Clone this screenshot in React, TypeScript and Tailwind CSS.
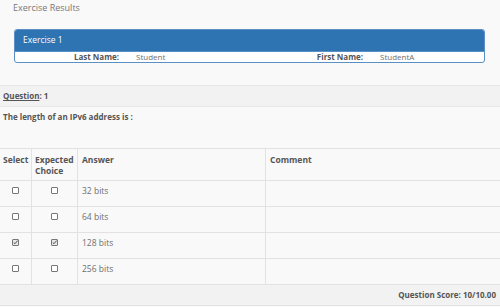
import React from "react";

function Box({ checked }: { checked?: boolean }) {
  return (
    <span className={"inline-flex w-[7px] h-[7px] border border-[#777] rounded-[1px] items-center justify-center " + (checked ? "bg-[#e8e8e8]" : "bg-white")}>
      {checked ? (
        <svg width="7" height="7" viewBox="0 0 7 7" className="block">
          <path d="M1 3.5 L2.8 5.2 L6.5 0.8" stroke="#444" strokeWidth="1.3" fill="none" />
        </svg>
      ) : null}
    </span>
  );
}

const rows = [
  { a: "32 bits", c: false, first: true },
  { a: "64 bits", c: false },
  { a: "128 bits", c: true },
  { a: "256 bits", c: false },
];

export default function App() {
  return (
    <div className="w-[500px] h-[307px] bg-[#f9f9f9] text-[#6f6f6f] overflow-hidden" style={{ fontFamily: '"Open Sans", sans-serif' }}>
      <div className="pl-[13px] pt-[1px] h-[29px] text-[9px] text-[#777]">Exercise Results</div>
      <div className="ml-[14px] w-[471px] border border-[#5a90c4] rounded-[3px] overflow-hidden bg-white">
        <div className="h-[21px] bg-[#2e73b2] text-white text-[8.5px] pl-[8px] flex items-center">Exercise 1</div>
        <div className="flex h-[11px] items-center text-[8px] border-t border-[#5a90c4]">
          <div className="w-[112px] text-right pr-[8px] font-bold text-[#555]">Last Name:</div>
          <div className="w-[132px] pl-[9px]">Student</div>
          <div className="w-[112px] text-right pr-[8px] font-bold text-[#555]">First Name:</div>
          <div className="flex-1 pl-[9px]">StudentA</div>
        </div>
      </div>
      <div className="h-[22px]" />
      <div className="border-t border-[#e6e6e6] bg-[#f2f2f2] h-[21px] flex items-center pl-[3px] text-[8px] font-bold text-[#555]">
        <span className="underline">Question</span>: 1
      </div>
      <div className="h-[42px] border-t border-[#e8e8e8] pl-[3px] pt-[4px] text-[8px] font-bold text-[#555]">
        The length of an IPv6 address is :
      </div>
      <div className="border-t border-[#e2e2e2]">
        <div className="flex h-[32px] text-[8.5px] font-bold text-[#555] border-b border-[#e2e2e2]">
          <div className="w-[32px] pl-[3px] pt-[5px] leading-[11px] border-r border-[#e2e2e2]">Select</div>
          <div className="w-[46px] pl-[3px] pt-[5px] leading-[11px] border-r border-[#e2e2e2]">Expected<br />Choice</div>
          <div className="w-[188px] pl-[4px] pt-[5px] leading-[11px] border-r border-[#e2e2e2]">Answer</div>
          <div className="flex-1 pl-[4px] pt-[5px] leading-[11px]">Comment</div>
        </div>
        {rows.map((r) => (
          <div key={r.a} className={"flex text-[8.5px] leading-[11px] " + (r.first ? "h-[25px]" : "h-[26px] border-t border-[#e2e2e2]")}>
            <div className="w-[32px] border-r border-[#e2e2e2] flex justify-center pt-[6px]"><Box checked={r.c} /></div>
            <div className="w-[46px] border-r border-[#e2e2e2] flex justify-center pt-[6px]"><Box checked={r.c} /></div>
            <div className="w-[188px] pl-[4px] pt-[4px] border-r border-[#e2e2e2]">{r.a}</div>
            <div className="flex-1" />
          </div>
        ))}
        <div className="border-t border-b border-[#e2e2e2] bg-[#f2f2f2] h-[22px] flex items-center justify-end pr-[4px] text-[8px] font-bold text-[#555]">
          Question Score: 10/10.00
        </div>
      </div>
    </div>
  );
}
